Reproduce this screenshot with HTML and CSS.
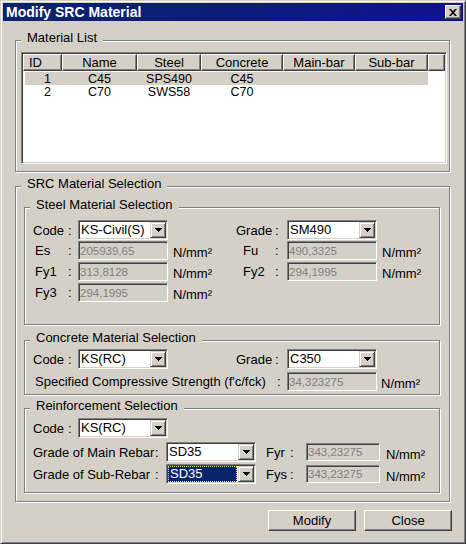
FILE: index.html
```html
<!DOCTYPE html>
<html lang="en">
<head>
<meta charset="UTF-8" />
<title>Modify SRC Material</title>
<link rel="stylesheet" href="styles.css">
</head>
<body>
<div class="dialog">
  <!-- Title bar -->
  <div class="titlebar">
    <span class="title">Modify SRC Material</span>
    <button class="close-btn" aria-label="Close">
      <svg width="8" height="7" viewBox="0 0 8 7"><path d="M0 0h2l2 2.3 2-2.3h2L5 3.5 8 7H6L4 4.7 2 7H0l3-3.5z"/></svg>
    </button>
  </div>

  <div class="content">
    <!-- Material list -->
    <div class="group">
      <div class="group-title">Material List</div>
      <div class="list-body">
        <div class="listview">
          <div class="lv-head">
            <div class="hd hd-id">ID</div>
            <div class="hd hd-name">Name</div>
            <div class="hd hd-steel">Steel</div>
            <div class="hd hd-conc">Concrete</div>
            <div class="hd hd-main">Main-bar</div>
            <div class="hd hd-sub">Sub-bar</div>
            <div class="hd hd-fill"></div>
          </div>
          <div class="lv-row sel">
            <div class="c c-id">1</div>
            <div class="c c-name">C45</div>
            <div class="c c-steel">SPS490</div>
            <div class="c c-conc">C45</div>
            <div class="c c-main"></div>
            <div class="c c-sub"></div>
          </div>
          <div class="lv-row">
            <div class="c c-id">2</div>
            <div class="c c-name">C70</div>
            <div class="c c-steel">SWS58</div>
            <div class="c c-conc">C70</div>
            <div class="c c-main"></div>
            <div class="c c-sub"></div>
          </div>
        </div>
      </div>
    </div>

    <!-- SRC material selection -->
    <div class="group src">
      <div class="group-title">SRC Material Selection</div>
      <div class="src-body">

        <div class="group steel">
          <div class="group-title">Steel Material Selection</div>
          <div class="steel-body cols">
            <div class="col col-left">
              <div class="frow r-combo">
                <label class="lbl"><span class="nm">Code</span>:</label>
                <div class="combo"><span class="combo-text">KS-Civil(S)</span><span class="combo-btn"><svg width="7" height="4" viewBox="0 0 7 4"><path d="M0 0H7V1H6V2H5V3H4V4H3V3H2V2H1V1H0Z"/></svg></span></div>
              </div>
              <div class="frow r-input">
                <label class="lbl"><span class="nm ind">Es</span>:</label>
                <input class="num" value="205939,65" disabled>
                <span class="unit">N/mm²</span>
              </div>
              <div class="frow r-input">
                <label class="lbl"><span class="nm ind">Fy1</span>:</label>
                <input class="num" value="313,8128" disabled>
                <span class="unit">N/mm²</span>
              </div>
              <div class="frow r-input">
                <label class="lbl"><span class="nm ind">Fy3</span>:</label>
                <input class="num" value="294,1995" disabled>
                <span class="unit">N/mm²</span>
              </div>
            </div>
            <div class="col col-right">
              <div class="frow r-combo">
                <label class="lbl lbl-g"><span class="nm">Grade</span>:</label>
                <div class="combo"><span class="combo-text">SM490</span><span class="combo-btn"><svg width="7" height="4" viewBox="0 0 7 4"><path d="M0 0H7V1H6V2H5V3H4V4H3V3H2V2H1V1H0Z"/></svg></span></div>
              </div>
              <div class="frow r-input">
                <label class="lbl lbl-g"><span class="nm ind-g">Fu</span>:</label>
                <input class="num" value="490,3325" disabled>
                <span class="unit">N/mm²</span>
              </div>
              <div class="frow r-input">
                <label class="lbl lbl-g"><span class="nm ind-g">Fy2</span>:</label>
                <input class="num" value="294,1995" disabled>
                <span class="unit">N/mm²</span>
              </div>
            </div>
          </div>
        </div>

        <div class="group concrete">
          <div class="group-title">Concrete Material Selection</div>
          <div class="concrete-body">
            <div class="cols">
              <div class="col col-left">
                <div class="frow r-combo">
                  <label class="lbl"><span class="nm">Code</span>:</label>
                  <div class="combo"><span class="combo-text">KS(RC)</span><span class="combo-btn"><svg width="7" height="4" viewBox="0 0 7 4"><path d="M0 0H7V1H6V2H5V3H4V4H3V3H2V2H1V1H0Z"/></svg></span></div>
                </div>
              </div>
              <div class="col col-right">
                <div class="frow r-combo">
                  <label class="lbl lbl-g"><span class="nm">Grade</span>:</label>
                  <div class="combo"><span class="combo-text">C350</span><span class="combo-btn"><svg width="7" height="4" viewBox="0 0 7 4"><path d="M0 0H7V1H6V2H5V3H4V4H3V3H2V2H1V1H0Z"/></svg></span></div>
                </div>
              </div>
            </div>
            <div class="frow r-input r-fck">
              <label class="lbl lbl-long"><span class="nm ind">Specified Compressive Strength (f'c/fck)</span>:</label>
              <input class="num" value="34,323275" disabled>
              <span class="unit">N/mm²</span>
            </div>
          </div>
        </div>

        <div class="group reinf">
          <div class="group-title">Reinforcement Selection</div>
          <div class="reinf-body">
            <div class="frow r-combo">
              <label class="lbl"><span class="nm">Code</span>:</label>
              <div class="combo"><span class="combo-text">KS(RC)</span><span class="combo-btn"><svg width="7" height="4" viewBox="0 0 7 4"><path d="M0 0H7V1H6V2H5V3H4V4H3V3H2V2H1V1H0Z"/></svg></span></div>
            </div>
            <div class="frow r-combo r-main">
              <label class="lbl lbl-rebar"><span class="nm">Grade of Main Rebar</span>:</label>
              <div class="combo"><span class="combo-text">SD35</span><span class="combo-btn"><svg width="7" height="4" viewBox="0 0 7 4"><path d="M0 0H7V1H6V2H5V3H4V4H3V3H2V2H1V1H0Z"/></svg></span></div>
              <label class="lbl lbl-f"><span class="nm">Fyr</span>:</label>
              <input class="num short" value="343,23275" disabled>
              <span class="unit">N/mm²</span>
            </div>
            <div class="frow r-combo r-sub">
              <label class="lbl lbl-rebar"><span class="nm">Grade of Sub-Rebar</span>:</label>
              <div class="combo"><span class="combo-text focus">SD35</span><span class="combo-btn"><svg width="7" height="4" viewBox="0 0 7 4"><path d="M0 0H7V1H6V2H5V3H4V4H3V3H2V2H1V1H0Z"/></svg></span></div>
              <label class="lbl lbl-f"><span class="nm">Fys</span>:</label>
              <input class="num short" value="343,23275" disabled>
              <span class="unit">N/mm²</span>
            </div>
          </div>
        </div>

      </div>
    </div>

    <div class="buttons">
      <button class="btn">Modify</button>
      <button class="btn">Close</button>
    </div>
  </div>
</div>
</body>
</html>
```

FILE: styles.css
```css
* { box-sizing: border-box; }
body {
  margin: 0;
  font-family: "Liberation Sans", Arial, sans-serif;
  font-size: 13px;
  color: #000;
  background: #d4d0c8;
}
.dialog {
  width: 466px;
  height: 544px;
  padding: 2px;
  background: #d4d0c8;
  border: 1px solid;
  border-color: #d4d0c8 #404040 #404040 #d4d0c8;
  box-shadow: inset 1px 1px #fff, inset -1px -1px #808080;
}
.titlebar {
  height: 18px;
  display: flex;
  align-items: center;
  padding: 0 2px 0 3px;
  background: linear-gradient(to right, #0a246a, #10128f);
}
.title {
  color: #fff;
  font-weight: bold;
  font-size: 14px;
}
.close-btn {
  margin-left: auto;
  width: 16px;
  height: 14px;
  padding: 0;
  display: flex;
  align-items: center;
  justify-content: center;
  background: #d4d0c8;
  border: 1px solid;
  border-color: #fff #404040 #404040 #fff;
  box-shadow: inset -1px -1px #808080;
}
.content { padding: 19px 13px 0 12px; }

/* etched group box */
.group {
  border: 1px solid #808080;
  box-shadow: inset 1px 1px #fff, 1px 1px #fff;
}
.group-title {
  display: table;
  height: 14px;
  line-height: 14px;
  margin: -10px 0 -4px 5px;
  padding: 0 6px;
  background: #d4d0c8;
  white-space: nowrap;
}
.list-body { padding: 11px 2px 7px 5px; }

/* list view */
.listview {
  height: 112px;
  padding: 1px;
  background: #fff;
  border: 1px solid;
  border-color: #808080 #fff #fff #808080;
  box-shadow: inset 1px 1px #404040, inset -1px -1px #d4d0c8;
}
.lv-head { display: flex; height: 17px; }
.hd {
  flex: none;
  line-height: 15px;
  text-align: center;
  background: #d4d0c8;
  border: 1px solid;
  border-color: #fff #404040 #404040 #fff;
  box-shadow: inset -1px -1px #808080;
}
.hd-id { width: 39px; text-align: left; padding-left: 5px; }
.hd-name, .c-name { width: 75px; }
.hd-steel, .c-steel { width: 64px; }
.hd-conc, .c-conc { width: 82px; }
.hd-main, .c-main { width: 72px; }
.hd-sub, .c-sub { width: 73px; }
.hd-fill { flex: 1; }
.lv-row {
  display: flex;
  width: 403px;
  height: 14px;
  line-height: 14px;
  font-size: 12.5px;
  margin-left: 2px;
}
.lv-row.sel { background: #d4d0c8; margin-top: 1px; height: 13px; }
.c { flex: none; text-align: center; white-space: nowrap; }
.c-id { width: 37px; text-align: left; padding-left: 19px; }

/* SRC selection */
.src { margin-top: 14px; }
.src-body { padding: 20px 9px 8px 8px; }
.concrete { margin-top: 15px; }
.reinf { margin-top: 13px; }
.steel-body { padding: 12px 0 22px 8px; }
.concrete-body { padding: 8px 0 3px 8px; }
.reinf-body { padding: 9px 0 8px 8px; }

.cols { display: flex; }
.col-left { width: 203px; flex: none; }
.frow { display: flex; align-items: center; white-space: nowrap; }
.r-combo { height: 20px; }
.r-input { height: 19px; }
.steel .r-combo { margin-bottom: 1px; }
.steel .r-input { margin-bottom: 2px; }
.steel .r-input:last-child { margin-bottom: 0; }
.r-fck { margin-top: 3px; }
.r-main { margin-top: 4px; }
.r-sub { margin-top: 2px; }

.lbl { display: flex; flex: none; width: 45px; }
.lbl .nm { width: 35px; flex: none; }
.lbl-g { width: 51px; }
.lbl-g .nm { width: 39px; }
.lbl-long { width: 254px; }
.lbl-long .nm { width: 244px; }
.lbl-rebar { width: 133px; }
.lbl-rebar .nm { width: 122px; }
.lbl-f { width: 40px; margin-left: 10px; }
.lbl-f .nm { width: 24px; }
.ind { padding-left: 2px; }
.ind-g { padding-left: 7px; }

/* combo box */
.combo {
  flex: none;
  display: flex;
  width: 90px;
  height: 20px;
  padding: 1px;
  background: #fff;
  border: 1px solid;
  border-color: #808080 #fff #fff #808080;
  box-shadow: inset 1px 1px #404040, inset -1px -1px #d4d0c8;
}
.combo-text {
  flex: 1;
  padding-left: 1px;
  line-height: 16px;
  overflow: hidden;
}
.combo-text.focus {
  background: #0a246a;
  color: #fff;
  outline: 1px dotted #e8dc90;
  outline-offset: -1px;
  padding-left: 2px;
  margin-right: 1px;
}
.combo-btn {
  flex: none;
  width: 16px;
  height: 16px;
  display: flex;
  align-items: center;
  justify-content: center;
  background: #d4d0c8;
  border: 1px solid;
  border-color: #d4d0c8 #404040 #404040 #d4d0c8;
  box-shadow: inset 1px 1px #fff, inset -1px -1px #808080;
}

/* disabled number field */
.num {
  flex: none;
  width: 90px;
  height: 19px;
  margin: 0;
  padding: 0 0 0 1px;
  font-family: "Liberation Sans", Arial, sans-serif;
  font-size: 11.5px;
  color: #808080;
  -webkit-text-fill-color: #808080;
  opacity: 1;
  background: #d4d0c8;
  border: 1px solid;
  border-color: #808080 #fff #fff #808080;
  box-shadow: inset 1px 1px #404040, inset -1px -1px #d4d0c8;
}
.num.short { width: 74px; height: 18px; }
.unit { margin-left: 5px; margin-top: 4px; }
.r-fck .unit { margin-left: 4px; }
.reinf .unit { margin-left: 6px; }

.buttons {
  display: flex;
  justify-content: flex-end;
  gap: 8px;
  margin: 8px -2px 0 0;
}
.btn {
  width: 88px;
  height: 21px;
  padding: 0;
  font-family: "Liberation Sans", Arial, sans-serif;
  font-size: 13px;
  color: #000;
  background: #d4d0c8;
  border: 1px solid;
  border-color: #fff #404040 #404040 #fff;
  box-shadow: inset -1px -1px #808080;
}
```
